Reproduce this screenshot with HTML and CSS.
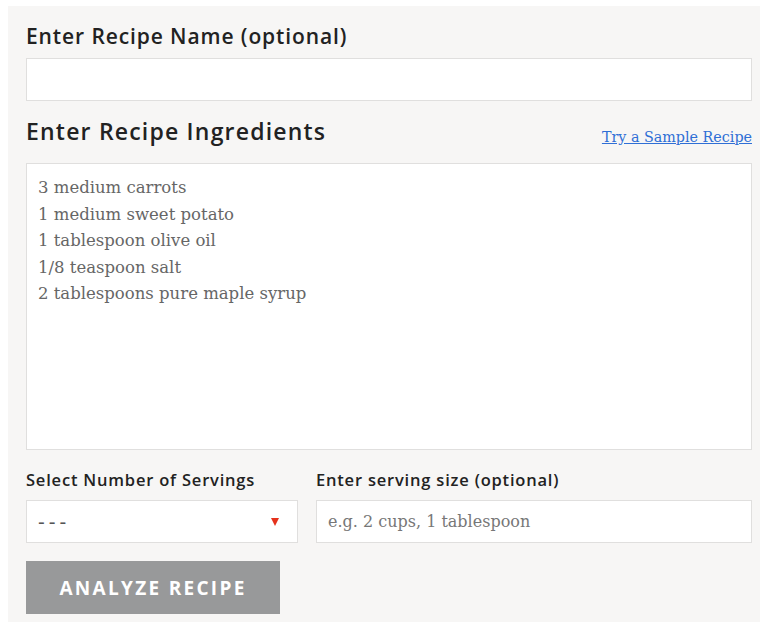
FILE: index.html
```html
<!DOCTYPE html>
<html lang="en">
<head>
    <meta charset="UTF-8">
    <meta name="viewport" content="width=device-width, initial-scale=1.0">
    <title>Recipe Analyzer</title>
    <link rel="stylesheet" href="styles.css">
</head>
<body>
    <div class="form-box">
        <label class="big-label" for="recipeName">Enter Recipe Name (optional)</label>
        <input type="text" id="recipeName" class="field">

        <div class="label-row">
            <label class="big-label" for="ingredients">Enter Recipe Ingredients</label>
            <a href="#" class="sample-link">Try a Sample Recipe</a>
        </div>
        <textarea id="ingredients" class="field ingredients">3 medium carrots
1 medium sweet potato
1 tablespoon olive oil
1/8 teaspoon salt
2 tablespoons pure maple syrup</textarea>

        <div class="servings-row">
            <div class="servings-col">
                <label class="small-label" for="servings">Select Number of Servings</label>
                <div class="select-wrap">
                    <select id="servings" class="field">
                        <option>---</option>
                        <option>1</option>
                        <option>2</option>
                        <option>4</option>
                    </select>
                    <span class="arrow"></span>
                </div>
            </div>
            <div class="size-col">
                <label class="small-label" for="servingSize">Enter serving size (optional)</label>
                <input type="text" id="servingSize" class="field" placeholder="e.g. 2 cups, 1 tablespoon">
            </div>
        </div>

        <button class="analyze-btn">Analyze Recipe</button>
    </div>
</body>
</html>
```

FILE: styles.css
```css
body {
    margin: 0;
    background-color: #fff;
    font-family: 'Open Sans', sans-serif;
    color: #222;
}
.form-box {
    margin: 6px 8px 0 8px;
    background-color: #f7f6f5;
    padding: 16px 8px 8px 18px;
    min-height: 620px;
    box-sizing: border-box;
}
.big-label {
    display: block;
    font-size: 21px;
    font-weight: 600;
    letter-spacing: 0.9px;
    color: #222;
    line-height: 28px;
    margin-bottom: 8px;
}
.label-row {
    display: flex;
    justify-content: space-between;
    align-items: flex-end;
    margin-top: 16px;
    margin-bottom: 18px;
}
.label-row .big-label {
    font-size: 23px;
    letter-spacing: 1.2px;
    margin-bottom: 0;
}
.sample-link {
    font-family: 'DejaVu Serif', serif;
    font-size: 14.3px;
    color: #2f6fd6;
    margin-bottom: 0;
}
.field {
    display: block;
    width: 100%;
    box-sizing: border-box;
    height: 43px;
    border: 1px solid #e0dfde;
    background-color: #fff;
    border-radius: 0;
    font-family: 'DejaVu Serif', serif;
    font-size: 16px;
    color: #666;
    padding: 0 11px;
    outline: none;
}
.field::placeholder {
    color: #777;
}
.ingredients {
    height: 287px;
    padding: 11px 11px;
    font-size: 16.5px;
    line-height: 26.6px;
    resize: none;
}
.servings-row {
    display: flex;
    gap: 18px;
    margin-top: 19px;
}
.servings-col {
    width: 272px;
}
.size-col {
    flex: 1;
}
.small-label {
    display: block;
    font-size: 16.5px;
    font-weight: 600;
    letter-spacing: 0.8px;
    color: #222;
    line-height: 22px;
    margin-bottom: 9px;
}
.select-wrap {
    position: relative;
}
.select-wrap select {
    appearance: none;
    -webkit-appearance: none;
    color: #555;
    font-size: 20px;
    letter-spacing: 4px;
}
.arrow {
    position: absolute;
    right: 19px;
    top: 18px;
    width: 0;
    height: 0;
    border-left: 4px solid transparent;
    border-right: 4px solid transparent;
    border-top: 8px solid #e5321c;
}
.analyze-btn {
    display: block;
    margin-top: 18px;
    width: 254px;
    height: 53px;
    border: none;
    background-color: #98999a;
    color: #fff;
    font-family: 'Open Sans', sans-serif;
    font-size: 19px;
    font-weight: 700;
    text-transform: uppercase;
    letter-spacing: 2.3px;
    cursor: pointer;
}
```
